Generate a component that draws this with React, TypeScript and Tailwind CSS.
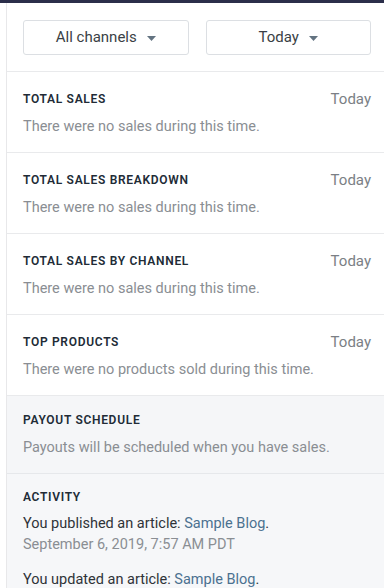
import React from 'react';

const Caret = () => (
  <svg width="9" height="5" viewBox="0 0 9 5" className="ml-[10px] mt-[1px]">
    <path d="M0 0h9L4.5 5z" fill="#637381" />
  </svg>
);

const Dropdown = ({ label }: { label: string }) => (
  <button className="flex-1 h-[35px] flex items-center justify-center border border-[#dcdfe3] rounded-[3px] bg-white text-[15px] text-[#3a3f45]">
    {label}
    <Caret />
  </button>
);

const sections = [
  { title: 'Total sales', text: 'There were no sales during this time.' },
  { title: 'Total sales breakdown', text: 'There were no sales during this time.' },
  { title: 'Total sales by channel', text: 'There were no sales during this time.' },
  { title: 'Top products', text: 'There were no products sold during this time.' },
];

export default function App() {
  return (
    <div className="w-[384px] h-[588px] overflow-hidden bg-white" style={{ fontFamily: 'Roboto, "Liberation Sans", sans-serif' }}>
      <div className="h-[3px] bg-[#2b2e4a]" />
      <div className="flex h-[585px]">
        <div className="w-[7px] bg-white border-r border-[#e8e8ea] shrink-0" />
        <div className="flex-1 flex flex-col">
          <div className="flex gap-[17px] pl-4 pr-[13px] pt-[17px] pb-[16px] border-b border-[#e9eaec]">
            <Dropdown label="All channels" />
            <Dropdown label="Today" />
          </div>
          {sections.map((s) => (
            <div key={s.title} className="pl-4 pr-[13px] pt-[19px] pb-[15px] border-b border-[#e9eaec]">
              <div className="flex items-center justify-between h-4">
                <span className="text-[12px] font-semibold uppercase tracking-[0.7px] text-[#212b36]">{s.title}</span>
                <span className="text-[15px] text-[#7b7f85]">Today</span>
              </div>
              <p className="mt-[10px] text-[14.5px] leading-5 text-[#8a8e93]">{s.text}</p>
            </div>
          ))}
          <div className="pl-4 pr-[13px] pt-[16px] pb-[15px] border-b border-[#e6e8eb] bg-[#f5f6f8]">
            <div className="h-4 flex items-center">
              <span className="text-[12px] font-semibold uppercase tracking-[0.7px] text-[#212b36]">Payout schedule</span>
            </div>
            <p className="mt-[10px] text-[14.5px] leading-5 text-[#8a8e93]">Payouts will be scheduled when you have sales.</p>
          </div>
          <div className="flex-1 pl-4 pr-[13px] pt-[15px] bg-[#f6f7f9]">
            <div className="h-4 flex items-center">
              <span className="text-[12px] font-semibold uppercase tracking-[0.7px] text-[#212b36]">Activity</span>
            </div>
            <p className="mt-[9px] text-[14.5px] leading-5 text-[#2f3338]">
              You published an article: <span className="text-[#4b7190]">Sample Blog</span>.
            </p>
            <p className="mt-px text-[14.5px] leading-5 text-[#8a8e93]">September 6, 2019, 7:57 AM PDT</p>
            <p className="mt-[15px] text-[14.5px] leading-5 text-[#2f3338]">
              You updated an article: <span className="text-[#4b7190]">Sample Blog</span>.
            </p>
          </div>
        </div>
      </div>
    </div>
  );
}
